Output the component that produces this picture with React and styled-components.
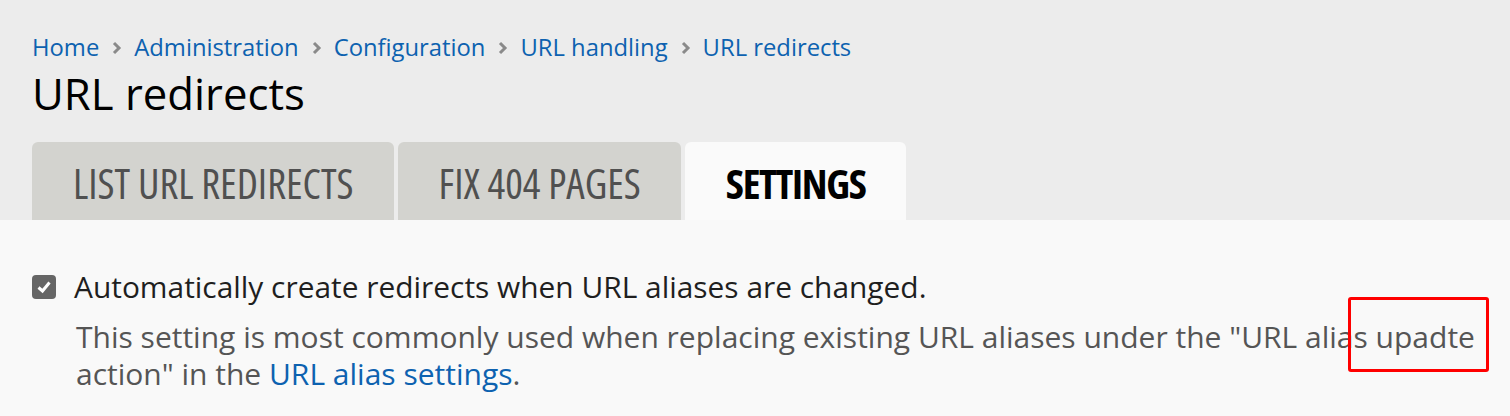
import React from "react";
import styled, { createGlobalStyle } from "styled-components";

const GlobalStyle = createGlobalStyle`
  html, body {
    margin: 0;
    padding: 0;
    background: #f9f9f9;
    font-family: "Open Sans", "Noto Sans", sans-serif;
  }
`;

const Header = styled.div`
  background-color: #ececec;
  padding: 30px 32px 0 32px;
`;

const Breadcrumb = styled.ol`
  display: flex;
  align-items: center;
  list-style: none;
  margin: 0;
  padding: 0;
  font-size: 23.8px;
  line-height: 34px;
`;

const Crumb = styled.li`
  display: flex;
  align-items: center;
`;

const CrumbLink = styled.a`
  color: #0d62b0;
  text-decoration: none;
`;

const Chevron = styled.svg`
  width: 10px;
  height: 14px;
  margin: 2px 12px 0 13px;
`;

const Title = styled.h1`
  margin: 0;
  font-size: 43.7px;
  font-weight: 400;
  line-height: 58px;
  color: #000;
`;

const Tabs = styled.ul`
  display: flex;
  gap: 4px;
  list-style: none;
  margin: 20px 0 0 0;
  padding: 0;
`;

const Tab = styled.li`
  background: ${(p) => (p.active ? "#fafafa" : "#d3d3cf")};
  border-radius: 6px 6px 0 0;
  padding: 4px 40px 0 41px;
  height: 78px;
  display: flex;
  align-items: center;
  font-size: 41.5px;
  font-stretch: 75%;
  letter-spacing: ${(p) => (p.active ? "-1.3px" : "0")};
  font-weight: ${(p) => (p.active ? 700 : 400)};
  color: ${(p) => (p.active ? "#000" : "#505050")};
  text-transform: uppercase;
  box-sizing: border-box;
`;

const Content = styled.div`
  position: relative;
  padding: 49px 32px 30px 32px;
  background: #f9f9f9;
`;

const CheckRow = styled.label`
  display: flex;
  align-items: center;
  gap: 18px;
  font-size: 29.9px;
  line-height: 36px;
  color: #1f1f1f;
`;

const Box = styled.span`
  width: 24px;
  height: 24px;
  border-radius: 4px;
  background: #666;
  display: flex;
  align-items: center;
  justify-content: center;
  flex-shrink: 0;
`;

const Description = styled.div`
  margin: 13px 0 0 44px;
  font-size: 30px;
  line-height: 37px;
  color: #555;
`;

const InlineLink = styled.a`
  color: #0d62b0;
  text-decoration: none;
`;

const Annotation = styled.div`
  position: absolute;
  left: 1348px;
  top: 77px;
  width: 135px;
  height: 69px;
  border: 3px solid #f00;
  border-radius: 3px;
`;

const crumbs = [
  "Home",
  "Administration",
  "Configuration",
  "URL handling",
  "URL redirects",
];

const tabs = ["List URL redirects", "Fix 404 pages", "Settings"];

const App = () => {
  return (
    <>
      <GlobalStyle />
      <Header>
        <Breadcrumb>
          {crumbs.map((c, i) => (
            <Crumb key={c}>
              {i > 0 && (
                <Chevron viewBox="0 0 10 14">
                  <path
                    d="M2 2 L7 7 L2 12"
                    fill="none"
                    stroke="#8a8a8a"
                    strokeWidth="3"
                  />
                </Chevron>
              )}
              <CrumbLink href="#">{c}</CrumbLink>
            </Crumb>
          ))}
        </Breadcrumb>
        <Title>URL redirects</Title>
        <Tabs>
          {tabs.map((t, i) => (
            <Tab key={t} active={i === 2}>
              {t}
            </Tab>
          ))}
        </Tabs>
      </Header>
      <Content>
        <CheckRow>
          <Box>
            <svg width="18" height="18" viewBox="0 0 18 18">
              <path
                d="M3.5 9.5 L7.5 13 L14.5 4.5"
                fill="none"
                stroke="#fff"
                strokeWidth="3"
              />
            </svg>
          </Box>
          Automatically create redirects when URL aliases are changed.
        </CheckRow>
        <Description>
          This setting is most commonly used when replacing existing URL
          aliases under the "URL alias upadte action" in the{" "}
          <InlineLink href="#">URL alias settings</InlineLink>.
        </Description>
        <Annotation />
      </Content>
    </>
  );
};

export default App;
